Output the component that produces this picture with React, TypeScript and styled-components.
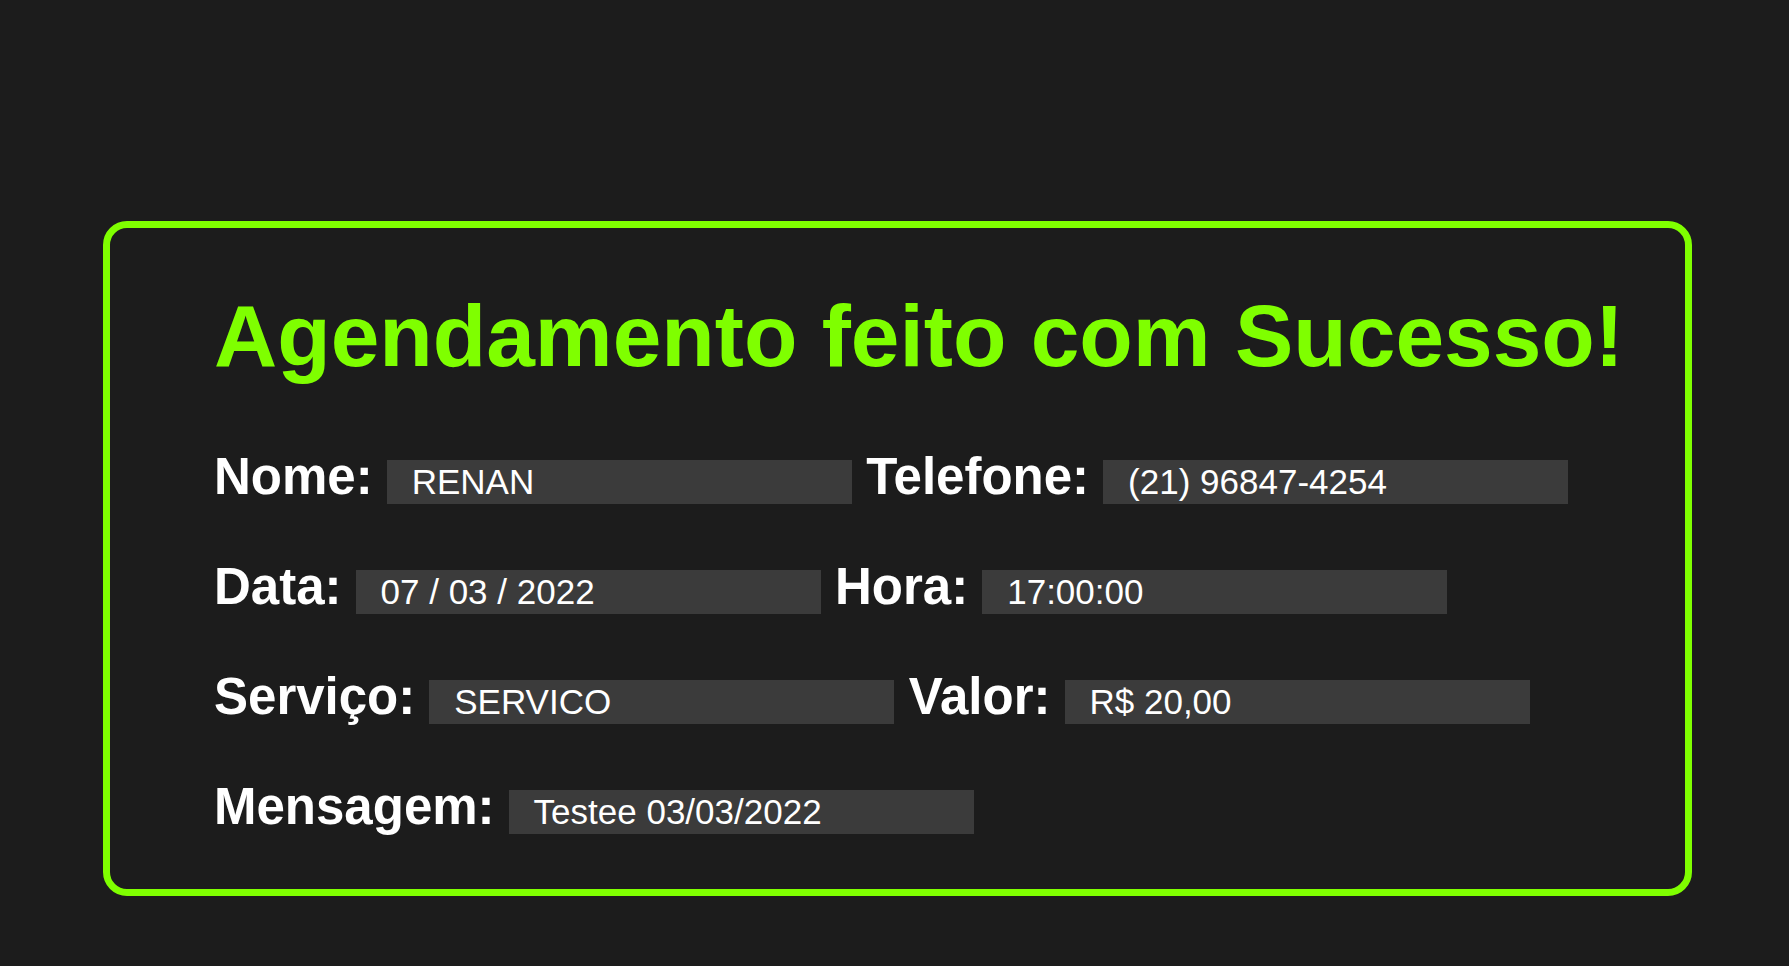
import styled, { createGlobalStyle } from "styled-components";

type T_Field = {
  label: string;
  value: string;
};

const rows: T_Field[][] = [
  [
    { label: "Nome:", value: "RENAN" },
    { label: "Telefone:", value: "(21) 96847-4254" },
  ],
  [
    { label: "Data:", value: "07 / 03 / 2022" },
    { label: "Hora:", value: "17:00:00" },
  ],
  [
    { label: "Serviço:", value: "SERVICO" },
    { label: "Valor:", value: "R$ 20,00" },
  ],
  [{ label: "Mensagem:", value: "Testee 03/03/2022" }],
];

function App() {
  return (
    <>
      <GlobalStyle />
      <Page>
        <Card>
          <Title>Agendamento feito com Sucesso!</Title>
          <RowList>
            {rows.map((row, i) => (
              <Row key={i}>
                {row.map((field) => (
                  <Field key={field.label}>
                    <Label>{field.label}</Label>
                    <ValueBox>{field.value}</ValueBox>
                  </Field>
                ))}
              </Row>
            ))}
          </RowList>
        </Card>
      </Page>
    </>
  );
}

const GlobalStyle = createGlobalStyle`
  html, body {
    margin: 0;
    padding: 0;
    background-color: #1c1c1c;
  }
  body {
    min-height: 966px;
    font-family: "Liberation Sans", Arial, sans-serif;
  }
`;

const Page = styled.div`
  min-height: 966px;
  padding: 221px 0 0 103px;
  box-sizing: border-box;
`;

const Card = styled.div`
  width: 1589px;
  box-sizing: border-box;
  padding: 64px 0 55px 104px;
  border: 7px solid #7fff00;
  border-radius: 24px;
`;

const Title = styled.h1`
  margin: 0 0 70.5px;
  font-size: 87.5px;
  line-height: 88px;
  font-weight: 700;
  color: #7fff00;
  white-space: nowrap;
`;

const RowList = styled.div`
  display: flex;
  flex-flow: column nowrap;
  gap: 57px;
`;

const Row = styled.div`
  display: flex;
  align-items: baseline;
  gap: 14.5px;
`;

const Field = styled.div`
  display: flex;
  align-items: baseline;
  gap: 14px;
`;

const Label = styled.span`
  font-size: 51px;
  line-height: 51px;
  font-weight: 700;
  color: #ffffff;
  white-space: nowrap;
`;

const ValueBox = styled.span`
  width: 465px;
  height: 44px;
  box-sizing: border-box;
  padding-left: 25px;
  background-color: #3b3b3b;
  font-size: 35px;
  line-height: 44px;
  color: #ffffff;
  white-space: nowrap;
`;

export default App;
